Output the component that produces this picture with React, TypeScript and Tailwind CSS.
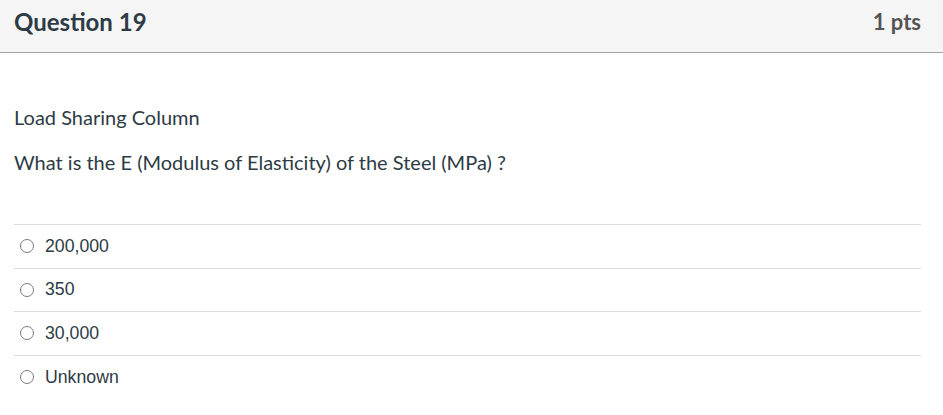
import React from 'react';

const answers = ['200,000', '350', '30,000', 'Unknown'];

const Radio: React.FC = () => (
  <span className="inline-block w-[14px] h-[14px] rounded-full border border-[#7a7a7a] bg-white shrink-0" />
);

const App: React.FC = () => {
  return (
    <div className="w-[943px] h-[415px] bg-white text-[#2d3b45] font-['Lato','Noto_Sans',sans-serif]">
      {/* Header */}
      <div className="h-[53px] bg-[#f5f5f5] border-b border-[#a5a5a5] flex items-start justify-between pl-[14px] pr-[22px] pt-[9px]">
        <h2 className="text-[24px] font-bold leading-[26px] text-[#2d3b45]">Question 19</h2>
        <div className="text-[22px] font-bold leading-[26px] text-[#555]">1 pts</div>
      </div>

      {/* Body */}
      <div className="px-[14px] pr-[22px]">
        <div className="pt-[51px] pb-[49px]">
          <p className="text-[20px] leading-[26px] mb-[19px]">Load Sharing Column</p>
          <p className="text-[20px] leading-[26px]">What is the E (Modulus of Elasticity) of the Steel (MPa) ?</p>
        </div>

        <div className="border-t border-[#dcdcdc]">
          {answers.map((a, i) => (
            <label
              key={a}
              className={`flex items-center h-[43.5px] pl-[6px] gap-[11px] ${i < answers.length - 1 ? 'border-b border-[#dcdcdc]' : ''}`}
            >
              <Radio />
              <span className="text-[17.7px] text-[#2d3b45] font-['Liberation_Sans',Arial,sans-serif]">{a}</span>
            </label>
          ))}
        </div>
      </div>
    </div>
  );
};

export default App;
